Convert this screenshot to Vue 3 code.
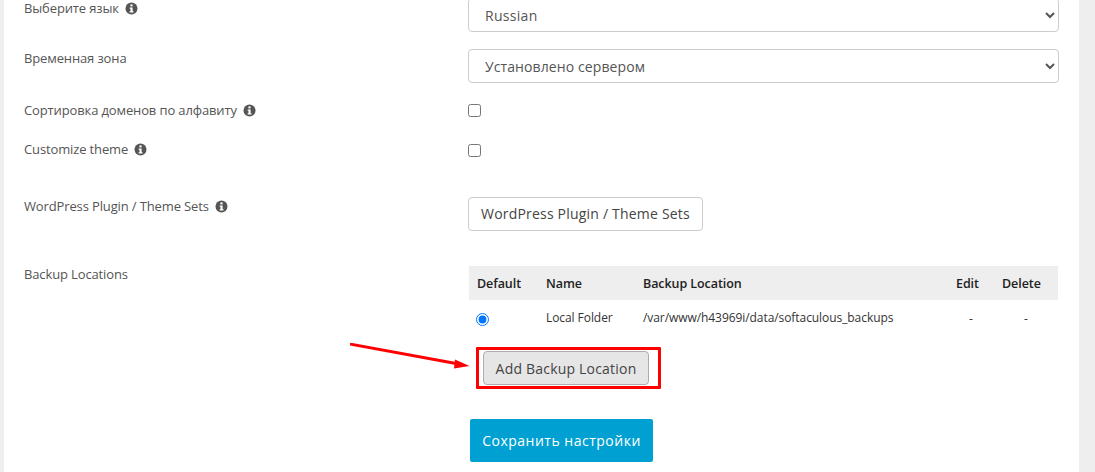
<template>
  <div class="page">
    <div class="panel">
      <div class="row row-lang">
        <div class="label">Выберите язык <InfoIcon /></div>
        <div class="field">
          <select class="control"><option>Russian</option></select>
        </div>
      </div>
      <div class="row row-zone">
        <div class="label">Временная зона</div>
        <div class="field">
          <select class="control"><option>Установлено сервером</option></select>
        </div>
      </div>
      <div class="row row-sort">
        <div class="label">Сортировка доменов по алфавиту <InfoIcon /></div>
        <div class="field"><input type="checkbox" class="check" /></div>
      </div>
      <div class="row row-theme">
        <div class="label">Customize theme <InfoIcon /></div>
        <div class="field"><input type="checkbox" class="check" /></div>
      </div>
      <div class="row row-sets">
        <div class="label">WordPress Plugin / Theme Sets <InfoIcon /></div>
        <div class="field"><button class="btn">WordPress Plugin / Theme Sets</button></div>
      </div>
      <div class="row row-backup">
        <div class="label">Backup Locations</div>
        <div class="field">
          <table class="locations">
            <thead>
              <tr>
                <th class="col-default">Default</th>
                <th class="col-name">Name</th>
                <th class="col-path">Backup Location</th>
                <th class="col-edit">Edit</th>
                <th class="col-delete">Delete</th>
              </tr>
            </thead>
            <tbody>
              <tr>
                <td><input type="radio" class="radio" checked /></td>
                <td class="text">Local Folder</td>
                <td class="text">/var/www/h43969i/data/softaculous_backups</td>
                <td class="dash">-</td>
                <td class="dash">-</td>
              </tr>
            </tbody>
          </table>
          <div class="highlight"><button class="btn btn-grey">Add Backup Location</button></div>
          <button class="btn-save">Сохранить настройки</button>
        </div>
      </div>
    </div>
    <!-- red annotation arrow on top of the screenshot -->
    <svg class="arrow" width="130" height="40" viewBox="0 0 130 40">
      <path d="M0 1 L106 20.500" stroke="#f00" stroke-width="2.800" fill="none" />
      <path d="M119.500 23 L105 16.500 L104 25.500 Z" fill="#f00" />
    </svg>
  </div>
</template>

<script setup>
import { h } from 'vue'

// small "i" badge next to the labels
const InfoIcon = () =>
  h('svg', { class: 'info', width: 13, height: 13, viewBox: '0 0 13 13' }, [
    h('circle', { cx: 6.5, cy: 6.5, r: 6, fill: '#555' }),
    h('rect', { x: 5.4, y: 2.4, width: 2.2, height: 2, fill: '#fff' }),
    h('path', { d: 'M4.700 5.400H7.600V9.200H8.500V10.500H4.600V9.200H5.500V6.700H4.700Z', fill: '#fff' })
  ])
</script>

<style>
html,
body {
  margin: 0;
  background: #eee;
  overflow: hidden;
}
</style>

<style scoped>
.page {
  position: relative;
  width: 1095px;
  height: 472px;
  overflow: hidden;
  background: #eeeeee;
  font-family: "Open Sans", "Noto Sans", sans-serif;
  color: #333;
}

.panel {
  margin-left: 4px;
  width: 1075px;
  height: 474px;
  background: #fff;
  padding: 0 20px;
  box-sizing: border-box;
  margin-top: -2px;
}

.row {
  display: grid;
  grid-template-columns: 444px 591px;
}

.row-lang { height: 51px; }
.row-zone { height: 55px; }
.row-sort { height: 40px; }
.row-theme { height: 53px; }
.row-sets { height: 69px; }

.label {
  font-size: 13px;
  line-height: 18px;
  letter-spacing: -0.13px;
  color: #555;
}

.row-lang .label { margin-top: 1px; }
.row-sort .label { margin-top: -3px; }
.row-theme .label { margin-top: -4px; }
.row-backup .label { margin-top: -1px; }

.info {
  vertical-align: -2px;
  margin-left: 3px;
}

.control {
  display: block;
  width: 591px;
  height: 34px;
  border: 1px solid #ccc;
  border-radius: 4px;
  background: #fff;
  color: #555;
  font-family: inherit;
  font-size: 14px;
  letter-spacing: 0.3px;
  padding: 0 12px;
  box-sizing: border-box;
}

.row-zone .control { letter-spacing: 0.1px; }

.check {
  display: block;
  width: 13px;
  height: 13px;
  margin: 0;
}

.btn {
  display: block;
  height: 34px;
  padding: 0 12px;
  border: 1px solid #ccc;
  border-radius: 4px;
  background: #fff;
  color: #444;
  font-family: inherit;
  font-size: 14px;
  letter-spacing: 0.2px;
  white-space: nowrap;
  box-sizing: border-box;
}

.row-sets .btn { padding-bottom: 2px; }

.locations {
  width: 589px;
  margin-left: 1px;
  border-collapse: collapse;
  table-layout: fixed;
  font-size: 12px;
  letter-spacing: -0.07px;
  color: #333;
}

.locations th,
.locations td {
  box-sizing: border-box;
  padding: 0 0 0 8px;
  text-align: left;
}

.locations th {
  height: 34px;
  background: #eee;
  font-weight: 600;
  font-size: 12.5px;
  color: #222;
}

.locations td {
  height: 36px;
}

.locations td.text { padding-bottom: 2px; }

.col-default { width: 69px; }
.col-name { width: 97px; }
.col-path { width: 313px; }
.col-edit { width: 46px; }
.col-delete { width: 64px; }

.locations td.dash {
  padding: 0;
  text-align: center;
}

.radio {
  display: block;
  width: 13px;
  height: 13px;
  margin: 2px 0 0 -1px;
}

.highlight {
  width: 185px;
  height: 42px;
  margin: 11px 0 0 8px;
  padding: 1px 9px 0 4px;
  border: 3px solid #f00;
  border-radius: 1px;
  box-sizing: border-box;
}

.btn-grey {
  width: 166px;
  padding: 0;
  background: #e6e6e6;
  border-color: #adadad;
}

.btn-save {
  display: block;
  width: 183px;
  height: 43px;
  margin: 30px 0 0 2px;
  padding: 0 0 0 0;
  border: 0;
  border-radius: 2px;
  background: #00a0d2;
  color: #fff;
  font-family: inherit;
  font-size: 14px;
  letter-spacing: 0.5px;
}

.arrow {
  position: absolute;
  left: 350px;
  top: 343px;
}
</style>
